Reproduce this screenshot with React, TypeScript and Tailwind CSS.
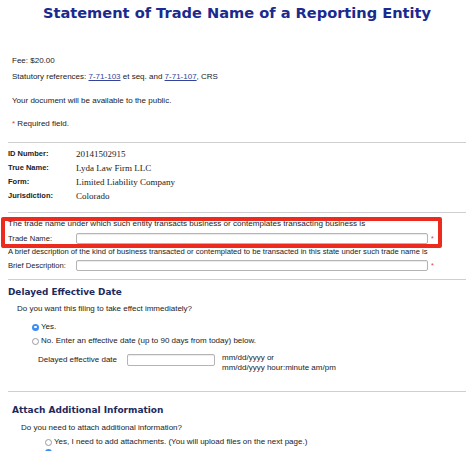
import React from 'react'

const BODY = "font-['Liberation_Sans',Arial,sans-serif]"
const HEAD = "font-['DejaVu_Sans',Verdana,sans-serif] font-bold"

function Radio({ checked = false }: { checked?: boolean }) {
  if (checked) {
    return (
      <span className="w-[7px] h-[7px] rounded-full bg-[#3d8ef2] flex items-center justify-center shrink-0">
        <span className="w-[2.5px] h-[2.5px] rounded-full bg-white" />
      </span>
    )
  }
  return <span className="w-[7px] h-[7px] rounded-full border border-[#9a9a9a] bg-white shrink-0" />
}

function Field({ label, top }: { label: string; top: string }) {
  return (
    <div className={`flex items-center h-[11px] ${top}`}>
      <span className="w-[68px] ml-[8px] text-[7.6px]">{label}</span>
      <span className="w-[352px] h-[11px] border border-[#b4b4b4] rounded-[2px] bg-white shadow-[inset_0_1px_1px_rgba(0,0,0,0.08)]" />
      <span className="ml-[3px] text-[#e23b2e] text-[7px]">*</span>
    </div>
  )
}

function Hr({ top }: { top: string }) {
  return <div className={`ml-[8px] w-[458px] border-t border-[#cfcfcf] ${top}`} />
}

export default function App() {
  const info = [
    ['ID Number:', '20141502915'],
    ['True Name:', 'Lyda Law Firm LLC'],
    ['Form:', 'Limited Liability Company'],
    ['Jurisdiction:', 'Colorado'],
  ]

  return (
    <div className={`relative w-[474px] h-[451px] overflow-hidden bg-white text-[#222] text-[8px] leading-[10px] ${BODY}`}>
      {/* Title */}
      <div className="h-[27px] flex items-center justify-center">
        <h1 className={`${HEAD} text-[14.6px] text-[#1b2a8e] leading-none`}>
          Statement of Trade Name of a Reporting Entity
        </h1>
      </div>

      <div className="ml-[12px] mt-[29px] h-[10px]">Fee: $20.00</div>
      <div className="ml-[12px] mt-[6px] h-[10px]">
        Statutory references:{' '}
        <a className="text-[#34449a] underline">7-71-103</a> et seq. and{' '}
        <a className="text-[#34449a] underline">7-71-107</a>, CRS
      </div>
      <div className="ml-[12px] mt-[14px] h-[10px]">Your document will be available to the public.</div>
      <div className="ml-[12px] mt-[13px] h-[10px]">
        <span className="text-[#e23b2e]">*</span> Required field.
      </div>

      <Hr top="mt-[13px]" />

      <div className="mt-[4px]">
        {info.map(([k, v]) => (
          <div key={k} className="flex items-center h-[14px] ml-[8px]">
            <span className="w-[68px] font-bold text-[7.5px]">{k}</span>
            <span className="font-['Liberation_Serif',serif] text-[9px]">{v}</span>
          </div>
        ))}
      </div>

      <Hr top="mt-[9px]" />

      <div className="ml-[8px] mt-[6px] h-[10px] text-[8.1px]">
        The trade name under which such entity transacts business or contemplates transacting business is
      </div>
      <Field label="Trade Name:" top="mt-[4px]" />
      <div className="ml-[8px] mt-[3px] h-[10px] text-[7.65px] whitespace-nowrap">
        A brief description of the kind of business transacted or contemplated to be transacted in this state under such trade name is
      </div>
      <Field label="Brief Description:" top="mt-[3px]" />

      <Hr top="mt-[8px]" />

      <h2 className={`${HEAD} ml-[8px] mt-[6px] h-[12px] text-[8.9px] leading-[12px] text-[#1d2a5c]`}>
        Delayed Effective Date
      </h2>
      <div className="ml-[17px] mt-[6px] h-[10px]">Do you want this filing to take effect immediately?</div>
      <div className="ml-[32px] mt-[8px] h-[10px] flex items-center gap-[2px]">
        <Radio checked />
        <span>Yes.</span>
      </div>
      <div className="ml-[32px] mt-[4px] h-[10px] flex items-center gap-[2px]">
        <Radio />
        <span>No. Enter an effective date (up to 90 days from today) below.</span>
      </div>
      <div className="mt-[8px] flex items-start">
        <span className="ml-[38px] w-[89px] h-[12px] leading-[12px]">Delayed effective date</span>
        <span className="w-[88px] h-[12px] border border-[#b4b4b4] rounded-[2px] bg-white shadow-[inset_0_1px_1px_rgba(0,0,0,0.08)]" />
        <span className="ml-[7px] -mt-[1px] leading-[10px]">
          mm/dd/yyyy or
          <br />
          mm/dd/yyyy hour:minute am/pm
        </span>
      </div>

      <Hr top="mt-[18px]" />

      <h2 className={`${HEAD} ml-[12px] mt-[12px] h-[12px] text-[9px] leading-[12px] text-[#1d2a5c]`}>
        Attach Additional Information
      </h2>
      <div className="ml-[21px] mt-[7px] h-[10px]">Do you need to attach additional information?</div>
      <div className="ml-[45px] mt-[4px] h-[10px] flex items-center gap-[2px]">
        <Radio />
        <span>Yes, I need to add attachments. (You will upload files on the next page.)</span>
      </div>
      <div className="ml-[45px] mt-[2px] h-[10px] flex items-start">
        <Radio checked />
      </div>

      {/* annotation box */}
      <div className="absolute left-[1px] top-[217px] w-[441px] h-[31px] border-[4px] border-[#ec2a1e] rounded-[2px] pointer-events-none" />
    </div>
  )
}
